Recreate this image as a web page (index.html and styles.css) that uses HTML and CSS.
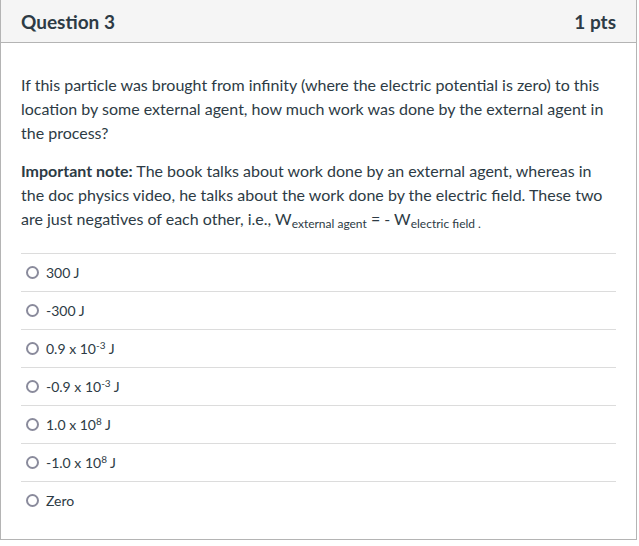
FILE: index.html
```html
<!DOCTYPE html>
<html>
<head>
<meta charset="utf-8">
<link rel="stylesheet" href="styles.css">
</head>
<body>
<div class="card">
  <div class="header">
    <span class="title">Question 3</span>
    <span class="pts">1 pts</span>
  </div>
  <div class="body">
    <p class="text">If this particle was brought from infinity (where the electric potential is zero) to this location by some external agent, how much work was done by the external agent in the process?</p>
    <p class="text"><strong>Important note:</strong> The book talks about work done by an external agent, whereas in the doc physics video, he talks about the work done by the electric field. These two are just negatives of each other, i.e., W<sub>external agent</sub> = - W<sub>electric field .</sub></p>
    <div class="answers">
      <div class="answer"><span class="radio"></span><span>300 J</span></div>
      <div class="answer"><span class="radio"></span><span>-300 J</span></div>
      <div class="answer"><span class="radio"></span><span>0.9 x 10<sup>-3</sup> J</span></div>
      <div class="answer"><span class="radio"></span><span>-0.9 x 10<sup>-3</sup> J</span></div>
      <div class="answer"><span class="radio"></span><span>1.0 x 10<sup>8</sup> J</span></div>
      <div class="answer"><span class="radio"></span><span>-1.0 x 10<sup>8</sup> J</span></div>
      <div class="answer"><span class="radio"></span><span>Zero</span></div>
    </div>
  </div>
</div>
</body>
</html>
```
FILE: styles.css
```css
html, body {
  margin: 0;
  padding: 0;
  background: #fff;
}
body {
  font-family: Lato, "Liberation Sans", sans-serif;
  color: #2d3b45;
}
.card {
  width: 635px;
  height: 539px;
  border: 1px solid #b4b4b4;
  border-top: none;
  box-sizing: content-box;
}
.header {
  height: 43px;
  background: #f5f5f5;
  border-bottom: 1px solid #b4b4b4;
  display: flex;
  justify-content: space-between;
  align-items: center;
  padding: 0 20px;
  box-sizing: border-box;
}
.title, .pts {
  font-weight: bold;
  font-size: 19px;
  color: #2d3b45;
}
.body {
  padding: 30px 20px 0;
}
.text {
  margin: 0 0 14px;
  font-size: 16px;
  line-height: 24px;
}
.text sub {
  font-size: 12px;
  line-height: 0;
  vertical-align: -3px;
}
.answers {
  margin-top: 22px;
}
.answer {
  height: 38px;
  border-top: 1px solid #dcdcdc;
  display: flex;
  align-items: center;
  padding-left: 5px;
  font-size: 14px;
  gap: 7px;
  box-sizing: border-box;
}
.answer sup {
  font-size: 10px;
  line-height: 0;
  vertical-align: 5px;
}
.radio {
  width: 13px;
  height: 13px;
  border: 2px solid #8a8b9c;
  border-radius: 50%;
  box-sizing: border-box;
  flex: none;
}
```
